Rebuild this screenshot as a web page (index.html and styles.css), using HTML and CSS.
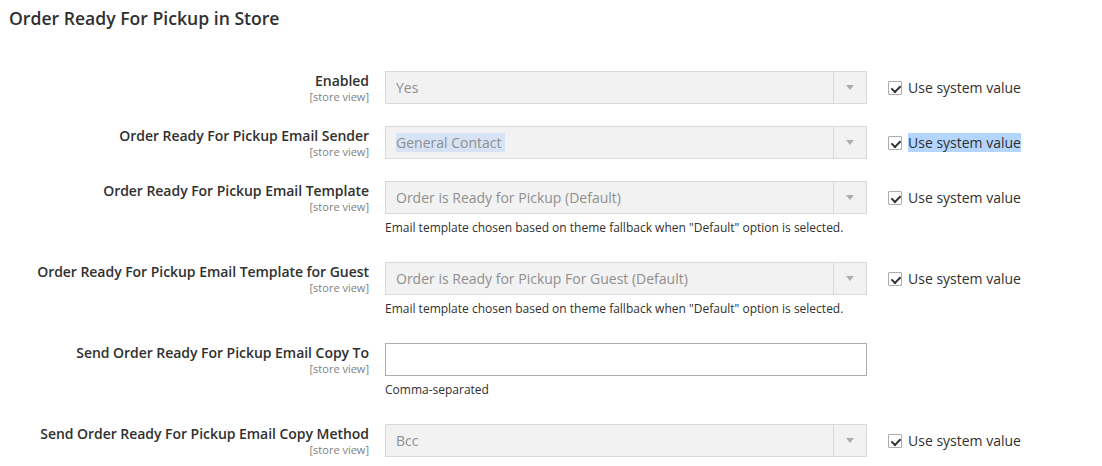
FILE: index.html
```html
<!DOCTYPE html>
<html>
<head>
<meta charset="utf-8">
<link rel="stylesheet" href="styles.css">
</head>
<body>
<div class="page">
  <h2 class="title">Order Ready For Pickup in Store</h2>
  <div class="form">
    <div class="row">
      <div class="label"><span class="name">Enabled</span><span class="scope">[store view]</span></div>
      <div class="control">
        <div class="select"><span class="value">Yes</span><span class="arrow"></span></div>
      </div>
      <div class="inherit"><span class="check"></span><span class="inherit-text">Use system value</span></div>
    </div>
    <div class="row">
      <div class="label"><span class="name">Order Ready For Pickup Email Sender</span><span class="scope">[store view]</span></div>
      <div class="control">
        <div class="select"><span class="value"><span class="sel-dim">General Contact&nbsp;</span></span><span class="arrow"></span></div>
      </div>
      <div class="inherit"><span class="check"></span><span class="inherit-text sel">Use system value</span></div>
    </div>
    <div class="row">
      <div class="label"><span class="name">Order Ready For Pickup Email Template</span><span class="scope">[store view]</span></div>
      <div class="control">
        <div class="select"><span class="value">Order is Ready for Pickup (Default)</span><span class="arrow"></span></div>
        <div class="note">Email template chosen based on theme fallback when "Default" option is selected.</div>
      </div>
      <div class="inherit"><span class="check"></span><span class="inherit-text">Use system value</span></div>
    </div>
    <div class="row">
      <div class="label"><span class="name">Order Ready For Pickup Email Template for Guest</span><span class="scope">[store view]</span></div>
      <div class="control">
        <div class="select"><span class="value">Order is Ready for Pickup For Guest (Default)</span><span class="arrow"></span></div>
        <div class="note">Email template chosen based on theme fallback when "Default" option is selected.</div>
      </div>
      <div class="inherit"><span class="check"></span><span class="inherit-text">Use system value</span></div>
    </div>
    <div class="row">
      <div class="label"><span class="name">Send Order Ready For Pickup Email Copy To</span><span class="scope">[store view]</span></div>
      <div class="control">
        <div class="input"></div>
        <div class="note">Comma-separated</div>
      </div>
      <div class="inherit"></div>
    </div>
    <div class="row">
      <div class="label"><span class="name">Send Order Ready For Pickup Email Copy Method</span><span class="scope">[store view]</span></div>
      <div class="control">
        <div class="select"><span class="value">Bcc</span><span class="arrow"></span></div>
      </div>
      <div class="inherit"><span class="check"></span><span class="inherit-text">Use system value</span></div>
    </div>
  </div>
</div>
</body>
</html>
```

FILE: styles.css
```css
* { box-sizing: border-box; }
html, body { margin: 0; padding: 0; background: #fff; }
body {
  font-family: "Open Sans", "Liberation Sans", sans-serif;
  color: #303030;
  width: 1102px;
  height: 466px;
  overflow: hidden;
}
.page { padding: 6px 0 0 0; }
.title {
  margin: 0 0 0 9px;
  font-size: 17.6px;
  font-weight: 600;
  line-height: 24px;
  color: #303030;
}
.form {
  margin-top: 41px;
  display: flex;
  flex-direction: column;
  gap: 22px;
}
.row {
  display: grid;
  grid-template-columns: 370px 482px auto;
  column-gap: 15px;
  align-items: start;
}
.label {
  display: flex;
  flex-direction: column;
  align-items: flex-end;
  padding-right: 1px;
}
.name {
  font-size: 14px;
  font-weight: 600;
  line-height: 19px;
  letter-spacing: -0.04px;
}
.scope {
  font-size: 11px;
  line-height: 13px;
  color: #808080;
}
.select {
  height: 33px;
  display: flex;
  align-items: center;
  background: #f2f2f2;
  border: 1px solid #d9d9d9;
}
.value {
  flex: 1;
  padding-left: 10px;
  font-size: 14px;
  color: #8f8f8f;
  line-height: 20px;
}
.sel-dim { background: #d5e3f5; }
.arrow {
  width: 33px;
  height: 31px;
  border-left: 1px solid #d9d9d9;
  position: relative;
}
.arrow::after {
  content: "";
  position: absolute;
  left: 12px;
  top: 13px;
  border-left: 4px solid transparent;
  border-right: 4px solid transparent;
  border-top: 5px solid #adadad;
}
.input {
  height: 33px;
  background: #fff;
  border: 1px solid #adadad;
}
.note {
  margin-top: 5px;
  margin-bottom: 3px;
  font-size: 12px;
  line-height: 18px;
  color: #303030;
}
.inherit {
  display: flex;
  align-items: center;
  height: 33px;
  padding-left: 6px;
}
.check {
  width: 14px;
  height: 14px;
  border: 1px solid #adadad;
  border-radius: 1px;
  background: #fff;
  position: relative;
  margin-right: 6px;
}
.check::after {
  content: "";
  position: absolute;
  left: 2px;
  top: 1px;
  width: 7px;
  height: 4px;
  border-left: 2px solid #303030;
  border-bottom: 2px solid #303030;
  transform: translate(0.5px, 2px) rotate(-45deg);
}
.inherit-text {
  font-size: 14px;
  line-height: 19px;
  color: #303030;
}
.sel { background: #b4d5fe; }
```
